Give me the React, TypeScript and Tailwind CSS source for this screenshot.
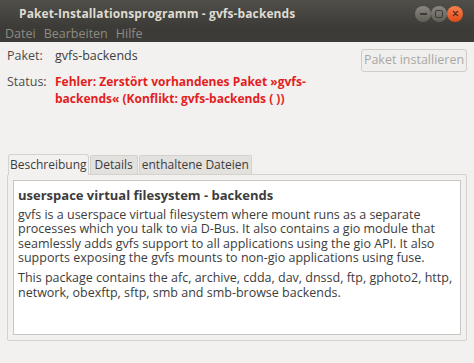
import React from "react";

const font = { fontFamily: '"Open Sans", "DejaVu Sans", sans-serif' };

function WindowButtons() {
  return (
    <div className="flex items-center gap-[0px] pr-[11px]">
      <span className="grid h-[16px] w-[16px] place-items-center rounded-full bg-gradient-to-b from-[#8a877f] to-[#5f5d57]">
        <span className="h-[2px] w-[7px] bg-[#3c3b37]" />
      </span>
      <span className="grid h-[16px] w-[16px] place-items-center rounded-full bg-gradient-to-b from-[#8a877f] to-[#5f5d57]">
        <span className="h-[8px] w-[8px] rounded-[2px] border-[1.5px] border-[#3c3b37]" />
      </span>
      <span className="grid h-[16px] w-[16px] place-items-center rounded-full bg-gradient-to-b from-[#f7814d] to-[#dd4a14]">
        <svg viewBox="0 0 10 10" className="h-[7px] w-[7px]" stroke="#4a2a1c" strokeWidth={1.8} strokeLinecap="round">
          <path d="M2 2l6 6M8 2l-6 6" />
        </svg>
      </span>
    </div>
  );
}

export default function App() {
  return (
    <div className="flex h-[363px] w-[474px] flex-col overflow-hidden bg-[#f2f1f0]" style={font}>
      {/* title bar */}
      <div className="flex h-[27px] items-center justify-between bg-gradient-to-b from-[#504f4a] to-[#3c3b37] pl-[19px]">
        <span className="text-[12px] font-bold tracking-[0.1px] text-[#dfdbd2]">
          Paket-Installationsprogramm - gvfs-backends
        </span>
        <WindowButtons />
      </div>
      {/* menu bar */}
      <div className="flex h-[15px] items-center gap-[8px] bg-[#3c3b37] pl-[5px] pb-[3px] text-[12.5px] leading-[15px] text-[#8f8b82]">
        <span>Datei</span>
        <span>Bearbeiten</span>
        <span>Hilfe</span>
      </div>

      <div className="flex flex-1 flex-col px-[7px]">
        <div className="flex justify-between pt-[5px]">
          <div className="flex flex-col gap-[9px] text-[12.5px] leading-[17px]">
            <div className="flex">
              <span className="w-[48px] text-[#4c4c4c]">Paket:</span>
              <span className="text-[#3c3c3c]">gvfs-backends</span>
            </div>
            <div className="flex">
              <span className="w-[48px] text-[#4c4c4c]">Status:</span>
              <span className="whitespace-nowrap text-[12px] font-bold text-[#e31e1e]">
                Fehler: Zerstört vorhandenes Paket »gvfs-
                <br />
                backends« (Konflikt: gvfs-backends ( ))
              </span>
            </div>
          </div>
          <button className="mt-[2px] h-[23px] w-[106px] rounded-[3px] border border-[#cfcdc9] bg-[#f0efed] text-[12.5px] text-[#a9a8a4]">
            Paket installieren
          </button>
        </div>

        {/* notebook */}
        <div className="mt-[47px] flex flex-col">
          <div className="flex items-end pl-[1px] text-[12px]">
            <span className="relative z-10 -mb-[1px] rounded-t-[3px] border border-b-0 border-[#d4d2ce] bg-[#f2f1f0] px-[1px] pt-[1px] pb-[1px] text-[#3c3c3c]">
              Beschreibung
            </span>
            <span className="ml-[1px] rounded-t-[2px] border border-b-0 border-[#d4d2ce] bg-[#e3e1de] px-[4px] text-[#3c3c3c]">
              Details
            </span>
            <span className="ml-[1px] rounded-t-[2px] border border-b-0 border-[#d4d2ce] bg-[#e3e1de] px-[2px] text-[#3c3c3c]">
              enthaltene Dateien
            </span>
          </div>
          <div className="h-[167px] rounded-[2px] border border-[#d4d2ce] p-[5px]">
            <div className="h-full border border-[#c9c7c3] bg-white px-[4px] pt-[7px] text-[12.5px] leading-[14.6px] text-[#3c3c3c]">
              <p className="mb-[5px] text-[13px] font-bold">userspace virtual filesystem - backends</p>
              <p className="mb-[5px]">
                gvfs is a userspace virtual filesystem where mount runs as a separate processes which you talk to via
                D-Bus. It also contains a gio module that seamlessly adds gvfs support to all applications using the
                gio API. It also supports exposing the gvfs mounts to non-gio applications using fuse.
              </p>
              <p>
                This package contains the afc, archive, cdda, dav, dnssd, ftp, gphoto2, http, network, obexftp, sftp,
                smb and smb-browse backends.
              </p>
            </div>
          </div>
        </div>
      </div>
    </div>
  );
}
